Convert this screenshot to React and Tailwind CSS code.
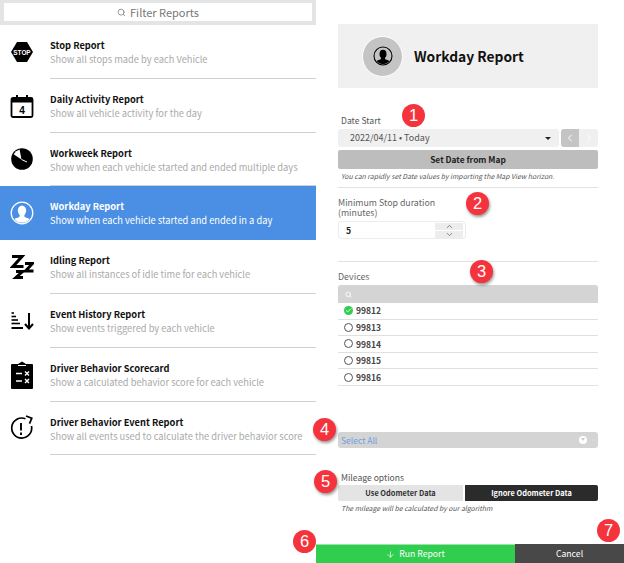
import React from 'react';
import { Search, ChevronDown, ChevronUp, ChevronLeft, ChevronRight, ArrowDown, Check } from 'lucide-react';

const PersonIcon = ({ color = '#000', cut = '#fff', size = 24 }) => (
  <svg width={size} height={size} viewBox="0 0 24 24">
    <circle cx="12" cy="12" r="10.8" fill={cut} stroke={color} strokeWidth="1.3" />
    <clipPath id={`clip-${size}`}>
      <circle cx="12" cy="12" r="9.8" />
    </clipPath>
    <g clipPath={`url(#clip-${size})`} fill={color}>
      <ellipse cx="12" cy="9.6" rx="4.2" ry="5.2" />
      <path d="M9.8 13.5 L14.2 13.5 L14.6 16 C17 17 19.5 17.6 20.5 19 L20.5 24 L3.5 24 L3.5 19 C4.5 17.6 7 17 9.4 16 Z" />
    </g>
  </svg>
);

const StopIcon = () => (
  <svg width="24" height="24" viewBox="0 0 24 24">
    <polygon points="7,2 17,2 23,12 17,22 7,22 1,12" fill="#000" />
    <text x="12" y="14.6" textAnchor="middle" fontSize="6.4" fontWeight="700" fill="#fff" fontFamily="Liberation Sans, sans-serif">STOP</text>
  </svg>
);

const CalendarIcon = () => (
  <svg width="24" height="24" viewBox="0 0 24 24">
    <rect x="1.5" y="4" width="21" height="19" rx="1.5" fill="#fff" stroke="#000" strokeWidth="1.8" />
    <rect x="1.5" y="4" width="21" height="4.5" fill="#000" />
    <rect x="6" y="1" width="2" height="5" fill="#000" />
    <rect x="16" y="1" width="2" height="5" fill="#000" />
    <text x="12" y="20" textAnchor="middle" fontSize="10" fontWeight="700" fill="#000" fontFamily="Liberation Sans, sans-serif">4</text>
  </svg>
);

const PieIcon = () => (
  <svg width="24" height="24" viewBox="0 0 24 24">
    <circle cx="12" cy="12" r="10.8" fill="#000" />
    <path d="M11.5 12.5 L3.6 7.2 A9.6 9.6 0 0 1 9.6 2.6 Z" fill="#fff" />
    <path d="M11.5 12.5 L17 15" stroke="#fff" strokeWidth="1" />
  </svg>
);

const ZzzIcon = () => (
  <svg width="24" height="26" viewBox="0 0 24 26" fill="none" stroke="#000" strokeWidth="3">
    <path d="M2 2.5 H12 L3 12.5 H13.5" />
    <path d="M15 9.5 H22.5 L15.5 17 H23.5" />
    <path d="M6 17.5 H12.5 L6 23.5 H13" />
  </svg>
);

const HistoryIcon = () => (
  <svg width="24" height="24" viewBox="0 0 24 24" stroke="#000" fill="none">
    <path d="M1.5 4 H4" strokeWidth="1.6" />
    <path d="M1.5 7.5 H6" strokeWidth="1.6" />
    <path d="M1.5 11 H8" strokeWidth="1.6" />
    <path d="M1.5 14.5 H10" strokeWidth="1.6" />
    <path d="M1.5 19 H13" strokeWidth="2" />
    <path d="M19 4 V19 M15 15 L19 19.5 L23 15" strokeWidth="2" />
  </svg>
);

const ClipboardIcon = () => (
  <svg width="24" height="28" viewBox="0 0 24 28">
    <path d="M1 4 Q1 3 2 3 H8 L12 0.5 L16 3 H22 Q23 3 23 4 V27 Q23 28 22 28 H2 Q1 28 1 27 Z" fill="#000" />
    <path d="M8 4.5 H16" stroke="#fff" strokeWidth="1" />
    <path d="M6 12.5 H12 M6 20 H12" stroke="#fff" strokeWidth="1.5" />
    <path d="M15 10.5 L19 14.5 M19 10.5 L15 14.5 M15 18 L19 22 M19 18 L15 22" stroke="#fff" strokeWidth="1.4" />
  </svg>
);

const AlertIcon = () => (
  <svg width="24" height="26" viewBox="0 0 24 26" fill="none" stroke="#000" strokeWidth="1.7">
    <path d="M21.5 11 A10 10 0 1 1 15.5 3.8" />
    <path d="M16 1 L21.8 3.2 L19.5 8.6" />
    <path d="M11 8 V15.5 M11 17.5 V20" strokeWidth="1.9" />
  </svg>
);

const reports = [
  { title: 'Stop Report', text: 'Show all stops made by each Vehicle', icon: <StopIcon /> },
  { title: 'Daily Activity Report', text: 'Show all vehicle activity for the day', icon: <CalendarIcon /> },
  { title: 'Workweek Report', text: 'Show when each vehicle started and ended multiple days', icon: <PieIcon /> },
  { title: 'Workday Report', text: 'Show when each vehicle started and ended in a day', icon: <PersonIcon color="#fff" cut="#4a8fe3" />, active: true },
  { title: 'Idling Report', text: 'Show all instances of idle time for each vehicle', icon: <ZzzIcon /> },
  { title: 'Event History Report', text: 'Show events triggered by each vehicle', icon: <HistoryIcon /> },
  { title: 'Driver Behavior Scorecard', text: 'Show a calculated behavior score for each vehicle', icon: <ClipboardIcon /> },
  { title: 'Driver Behavior Event Report', text: 'Show all events used to calculate the driver behavior score', icon: <AlertIcon /> },
];

const devices = ['99812', '99813', '99814', '99815', '99816'];

const Badge = ({ n, className }) => (
  <div className={`absolute flex h-[23px] w-[23px] items-center justify-center rounded-full bg-[#f4333d] font-['Liberation_Sans'] text-[16.5px] text-white ${className}`}>
    {n}
  </div>
);

export default function App() {
  return (
    <div className="relative flex h-[563px] w-[624px] overflow-hidden bg-white font-['Noto_Sans_CJK_JP',sans-serif] text-[#222]">
      <aside className="w-[316px] shrink-0">
        <div className="h-[25px] bg-[#e4e4e4] px-[4px] pt-[3px]">
          <div className="flex h-[18px] items-center justify-center gap-1 bg-white text-[11px] text-[#777]">
            <Search size={9} strokeWidth={2} />
            <span>Filter Reports</span>
          </div>
        </div>
        {reports.map((r) => (
          <div
            key={r.title}
            className={`flex h-[53.8px] ${r.active ? 'bg-[#4a8fe3] text-white' : ''}`}
          >
            <div className="flex w-[50px] shrink-0 items-center justify-start pl-[10px]">{r.icon}</div>
            <div className={`flex-1 pt-[13px] ${r.active ? '' : 'border-b border-[#d0d0d0]'}`}>
              <div className={`text-[9.3px] font-bold leading-[14px] ${r.active ? 'text-white' : 'text-[#111]'}`}>{r.title}</div>
              <div className={`text-[9.3px] leading-[14px] ${r.active ? 'text-white' : 'text-[#aaa]'}`}>{r.text}</div>
            </div>
          </div>
        ))}
      </aside>

      <main className="flex w-[308px] flex-col">
        <div className="ml-[22px] w-[260px]">
          <div className="mt-[24px] flex h-[64px] items-center gap-[11px] bg-[#f0f0f0] pl-[24px]">
            <div className="flex h-[41px] w-[41px] items-center justify-center rounded-full border border-white bg-[#c4c4c4]">
              <PersonIcon size={20} cut="#c4c4c4" />
            </div>
            <h1 className="text-[13.8px] font-bold text-[#111]">Workday Report</h1>
          </div>

          <div className="mt-[26px] pl-[3px] text-[8.6px] leading-[12px] text-[#555]">Date Start</div>
          <div className="mt-[3px] flex h-[18px] gap-[2px]">
            <div className="flex w-[221px] items-center justify-between rounded-[3px] bg-[#f0f0f0] pl-[12px] pr-[8px] text-[9px] text-[#555]">
              <span>2022/04/11 • Today</span>
              <span className="h-0 w-0 border-x-[3px] border-t-[3px] border-x-transparent border-t-[#222]" />
            </div>
            <div className="flex w-[37px] overflow-hidden rounded-[3px]">
              <div className="flex w-[18px] items-center justify-center bg-[#c4c4c4] text-white"><ChevronLeft size={12} /></div>
              <div className="flex flex-1 items-center justify-center bg-[#f0f0f0] text-white"><ChevronRight size={12} /></div>
            </div>
          </div>
          <div className="mt-[3px] flex h-[19px] items-center justify-center rounded-[2px] bg-[#bdbdbd] text-[8.4px] font-bold text-[#222]">
            Set Date from Map
          </div>
          <p className="mt-[1px] pl-[3px] text-[6.9px] italic leading-[12px] text-[#555]">
            You can rapidly set Date values by importing the Map View horizon.
          </p>
          <div className="mt-[5px] border-t border-[#e2e2e2]" />

          <div className="mt-[10px] text-[8.8px] leading-[10px] text-[#666]">
            Minimum Stop duration<br />(minutes)
          </div>
          <div className="mt-[3px] flex h-[18px] w-[128px] items-center justify-between rounded-[3px] border border-[#ececec] pl-[7px] pr-[2px] text-[8.6px] font-semibold">
            <span>5</span>
            <div className="flex w-[28px] flex-col gap-[1px] text-[#666]">
              <div className="flex h-[7px] items-center justify-center bg-[#ededed]"><ChevronUp size={9} /></div>
              <div className="flex h-[7px] items-center justify-center bg-[#ededed]"><ChevronDown size={9} /></div>
            </div>
          </div>
          <div className="mt-[22px] border-t border-[#e2e2e2]" />

          <div className="mt-[9px] text-[8.9px] leading-[12px] text-[#666]">Devices</div>
          <div className="mt-[2px] flex h-[18px] items-center rounded-t-[3px] bg-[#d4d4d4] pl-[7px] text-white">
            <Search size={7} strokeWidth={3} />
          </div>
          {devices.map((d, i) => (
            <div key={d} className="flex h-[16.6px] items-center gap-[3px] border-b border-[#e0e0e0] pl-[6px] text-[8.5px] font-semibold text-[#444]">
              {i === 0 ? (
                <span className="flex h-[9px] w-[9px] items-center justify-center rounded-full bg-[#2fce4f] text-white">
                  <Check size={7} strokeWidth={3} />
                </span>
              ) : (
                <span className="h-[9px] w-[9px] rounded-full border border-[#555]" />
              )}
              <span>{d}</span>
            </div>
          ))}

          <div className="mt-[46px] flex h-[16px] items-center justify-between rounded-[3px] bg-[#d4d4d4] pl-[3px] pr-[11px] text-[8.5px] text-[#6f9ee0]">
            <span>Select All</span>
            <span className="flex h-[8px] w-[8px] items-center justify-center rounded-full bg-white">
              <span className="h-0 w-0 border-x-[2px] border-t-[3px] border-x-transparent border-t-[#ccc]" />
            </span>
          </div>

          <div className="mt-[23px] pl-[3px] text-[8.6px] leading-[12px] text-[#555]">Mileage options</div>
          <div className="mt-[2px] flex h-[16px] gap-[2px] text-[7.4px] font-bold">
            <div className="flex w-[125px] items-center justify-center rounded-l-[2px] bg-[#e4e4e4] text-[#333]">Use Odometer Data</div>
            <div className="flex flex-1 items-center justify-center rounded-r-[2px] bg-[#2b2b2b] text-white">Ignore Odometer Data</div>
          </div>
          <p className="mt-[1px] pl-[3px] text-[6.9px] italic leading-[12px] text-[#555]">
            The mileage will be calculated by our algorithm
          </p>
        </div>

        <div className="mt-auto flex h-[19px] text-[8.7px] text-white">
          <div className="flex w-[199px] items-center justify-center gap-1 border-t border-[#9be3aa] bg-[#2fce4f]">
            <ArrowDown size={9} />
            <span>Run Report</span>
          </div>
          <div className="flex flex-1 items-center justify-center bg-[#484848]">Cancel</div>
        </div>
      </main>

      <Badge n={1} className="left-[402px] top-[104px]" />
      <Badge n={2} className="left-[466px] top-[192px] shadow-[1px_2px_3px_rgba(0,0,0,0.4)]" />
      <Badge n={3} className="left-[470px] top-[260px] shadow-[1px_2px_3px_rgba(0,0,0,0.4)]" />
      <Badge n={4} className="left-[313px] top-[418px] shadow-[1px_2px_3px_rgba(0,0,0,0.4)]" />
      <Badge n={5} className="left-[314px] top-[470px] shadow-[1px_2px_3px_rgba(0,0,0,0.4)]" />
      <Badge n={6} className="left-[293px] top-[530px]" />
      <Badge n={7} className="left-[597px] top-[519px]" />
    </div>
  );
}
